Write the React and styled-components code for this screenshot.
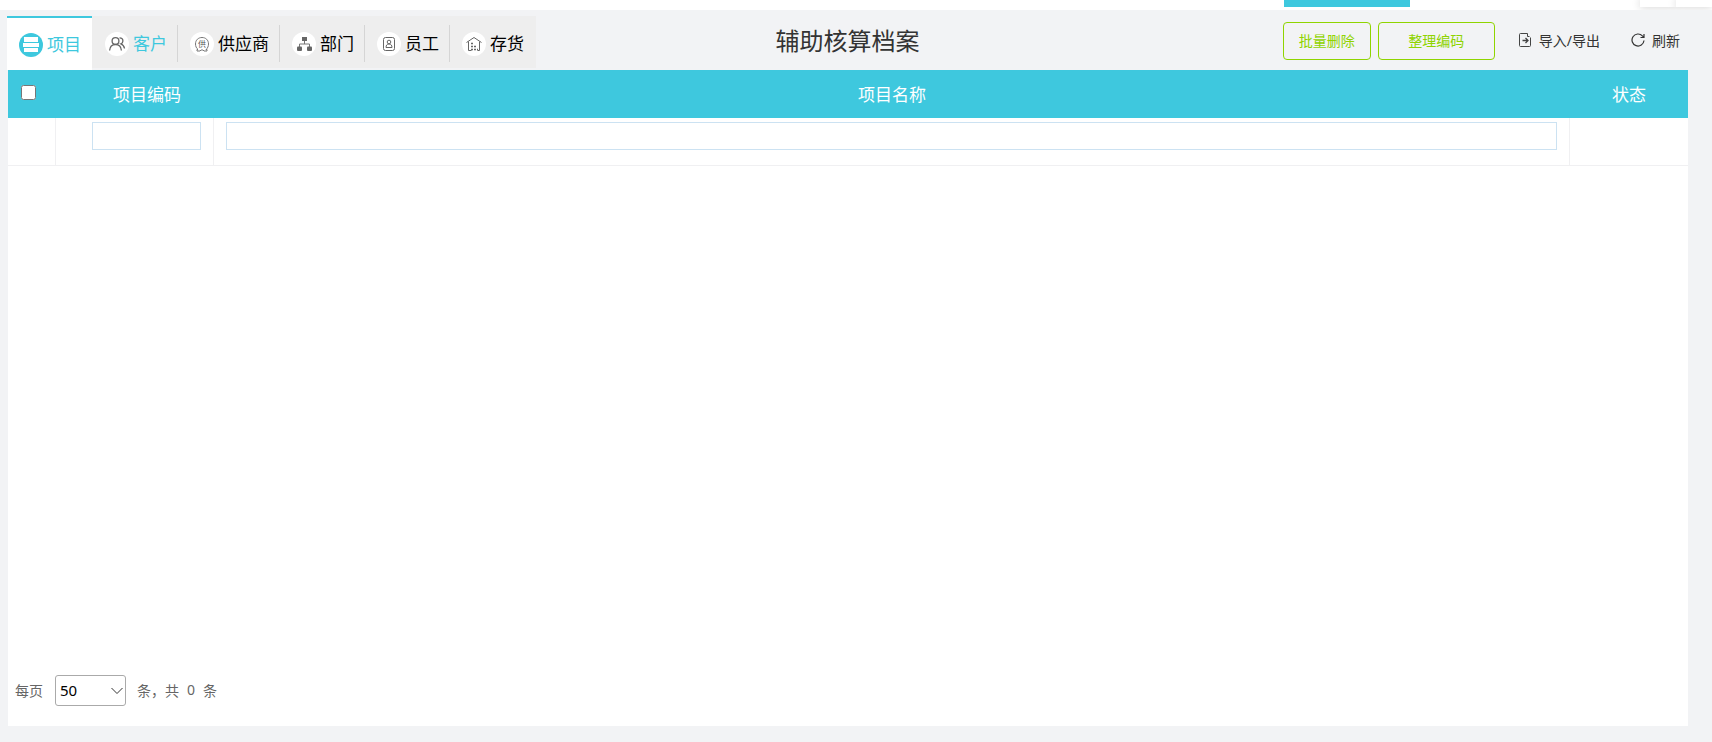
import React, { useState } from 'react';
import styled, { createGlobalStyle } from 'styled-components';

const GlobalStyle = createGlobalStyle`
  * {
    box-sizing: border-box;
  }

  body {
    margin: 0;
    background-color: #f2f3f5;
    font-family: 'Noto Sans', 'Noto Sans CJK SC', sans-serif;
    font-size: 14px;
    color: #333;
  }

  button,
  input,
  select {
    font-family: inherit;
  }
`;

const ProjectIcon = () => (
  <svg width="24" height="24" viewBox="0 0 24 24" fill="#fff">
    <path d="M5 4h14v5H5zM4 10h16v4H4zM5 15h14v4H5z" />
  </svg>
);

const CustomerIcon = () => (
  <svg width="24" height="24" viewBox="0 0 24 24" fill="none" stroke="#666" strokeWidth="1.3">
    <circle cx="10.500" cy="9" r="3.400" />
    <path d="M4.600 18.500c.3-3.600 2.600-6 5.900-6s5.600 2.400 5.900 6M14.500 5.800c2 0 3.400 1.300 3.400 3.100 0 1.400-.8 2.400-2 2.900 2 .7 3.200 2.300 3.600 4.700" />
  </svg>
);

const SupplierIcon = () => (
  <svg width="24" height="24" viewBox="0 0 24 24" fill="none" stroke="#777">
    <path d="M8 17.5C6.300 16.300 5.500 14 5.500 12c0-4 2.800-6.500 6.500-6.500s6.500 2.500 6.500 6.500c0 2-.8 4.300-2.500 5.500M8 17.500H7V19h3l1-1h2l1 1h3v-1.500h-1" />
    <text x="12" y="15" fontSize="8" textAnchor="middle" fill="#555" stroke="none">
      供
    </text>
  </svg>
);

const DepartmentIcon = () => (
  <svg width="24" height="24" viewBox="0 0 24 24" fill="#666">
    <rect x="10" y="5" width="5" height="4" />
    <path d="M12.5 9v3M7.500 15v-3h10v3" fill="none" stroke="#777" />
    <rect x="5" y="14.500" width="5" height="4.500" rx="1" />
    <rect x="15" y="14.500" width="5" height="4.500" rx="1" />
  </svg>
);

const StaffIcon = () => (
  <svg width="24" height="24" viewBox="0 0 24 24" fill="none" stroke="#666">
    <rect x="6.500" y="5.500" width="11" height="13" rx="2" />
    <circle cx="12" cy="10" r="1.800" />
    <path d="M9 15.500c0-2.200 1-3.500 3-3.500s3 1.300 3 3.500z" />
  </svg>
);

const StockIcon = () => (
  <svg width="24" height="24" viewBox="0 0 24 24" fill="none" stroke="#666">
    <path d="M4.500 10.500l7.500-5 7.500 5M6.500 9.500v9h3M17.500 9.500v9h-2" />
    <path d="M9 11.500h2M9 14.500h2M12 14.500h2M9 17.500h2M12 17.500h2M15 17.500h1" strokeWidth="1.500" />
  </svg>
);

const ExportIcon = () => (
  <svg width="14" height="16" viewBox="0 0 14 16" fill="none" stroke="#444">
    <path d="M9.500 1.500h-7a1 1 0 0 0-1 1v11a1 1 0 0 0 1 1h9a1 1 0 0 0 1-1v-8M9.500 1.500v3h2" />
    <path d="M4.500 8.500h5M7.500 6L10 8.500 7.500 11" strokeWidth="1.300" />
  </svg>
);

const RefreshIcon = () => (
  <svg width="14" height="14" viewBox="0 0 14 14" fill="none" stroke="#333" strokeWidth="1.200">
    <path d="M13 7.500a6 6 0 1 1-1.600-4.600L12.600 4M13 1v3.500H9.500" />
  </svg>
);

const tabs = [
  { name: '客户', icon: <CustomerIcon />, hover: true },
  { name: '供应商', icon: <SupplierIcon /> },
  { name: '部门', icon: <DepartmentIcon /> },
  { name: '员工', icon: <StaffIcon /> },
  { name: '存货', icon: <StockIcon /> },
];

const App = () => {
  const [code, setCode] = useState('');
  const [name, setName] = useState('');
  const [pageSize, setPageSize] = useState('50');

  return (
    <Page>
      <GlobalStyle />
      <TopStrip>
        <StripTab />
        <StripTool />
        <StripTool />
      </TopStrip>
      <Header>
        <Tabs>
          <ActiveTab type="button">
            <TabIcon $active>
              <ProjectIcon />
            </TabIcon>
            项目
          </ActiveTab>
          <TabGroup>
            {tabs.map((tab) => (
              <Tab key={tab.name} type="button" $hover={tab.hover}>
                <TabIcon>{tab.icon}</TabIcon>
                {tab.name}
              </Tab>
            ))}
          </TabGroup>
        </Tabs>
        <Title>辅助核算档案</Title>
        <Actions>
          <OutlineButton type="button">批量删除</OutlineButton>
          <OutlineButton type="button" $wide>
            整理编码
          </OutlineButton>
          <TextButton type="button">
            <ExportIcon />
            导入/导出
          </TextButton>
          <TextButton type="button">
            <RefreshIcon />
            刷新
          </TextButton>
        </Actions>
      </Header>
      <Panel>
        <Table>
          <colgroup>
            <col width="48" />
            <col width="158" />
            <col />
            <col width="118" />
          </colgroup>
          <thead>
            <tr>
              <CheckCell>
                <Checkbox type="checkbox" aria-label="全选" />
              </CheckCell>
              <HeadCell $indent>项目编码</HeadCell>
              <HeadCell>项目名称</HeadCell>
              <HeadCell>状态</HeadCell>
            </tr>
          </thead>
          <tbody>
            <tr>
              <FilterCell />
              <FilterCell $indent>
                <FilterInput
                  aria-label="项目编码"
                  value={code}
                  onChange={(e) => setCode(e.target.value)}
                />
              </FilterCell>
              <FilterCell>
                <FilterInput
                  aria-label="项目名称"
                  value={name}
                  onChange={(e) => setName(e.target.value)}
                />
              </FilterCell>
              <FilterCell />
            </tr>
          </tbody>
        </Table>
        <Pager>
          <PagerLabel htmlFor="pageSize">每页</PagerLabel>
          <PageSize
            id="pageSize"
            value={pageSize}
            onChange={(e) => setPageSize(e.target.value)}
          >
            <option>20</option>
            <option>50</option>
            <option>100</option>
          </PageSize>
          <PagerText>
            <span>条，共</span>
            <span>0</span>
            <span>条</span>
          </PagerText>
        </Pager>
      </Panel>
    </Page>
  );
};

export default App;

const Page = styled.div`
  display: flex;
  flex-direction: column;
  min-height: 100vh;
`;

const TopStrip = styled.div`
  display: flex;
  justify-content: flex-end;
  height: 10px;
  background-color: #fff;
  overflow: hidden;
`;

const StripTab = styled.div`
  width: 126px;
  height: 7px;
  margin-right: 230px;
  background-color: #3ec8de;
`;

const StripTool = styled.div`
  width: 36px;
  height: 7px;
  background-color: #fff;
  box-shadow: 0 0 8px rgba(0, 0, 0, 0.2);
`;

const Header = styled.header`
  display: grid;
  grid-template-columns: 1fr auto 1fr;
  height: 60px;
  padding: 6px 24px 0 7px;
`;

const Tabs = styled.nav`
  display: flex;
  align-items: flex-start;
`;

const TabGroup = styled.div`
  display: flex;
  align-items: center;
  height: 52px;
  padding: 2px 1px 0;
  background-color: #eee;
`;

const Tab = styled.button`
  display: flex;
  align-items: center;
  gap: 4px;
  height: 37px;
  padding: 2px 10px 0 12px;
  border: none;
  border-right: 1px solid #d5d5d5;
  background-color: transparent;
  color: ${(props) => (props.$hover ? '#3ec8de' : '#000')};
  font-size: 17px;
  line-height: 24px;
  white-space: nowrap;
  cursor: pointer;

  &:last-child {
    border-right-color: transparent;
  }
`;

const ActiveTab = styled(Tab)`
  height: 54px;
  padding: 2px 11px 0 12px;
  border-right: none;
  border-top: 2px solid #3ec8de;
  background-color: #fff;
  color: #3ec8de;
`;

const TabIcon = styled.span`
  display: flex;
  width: 24px;
  height: 24px;
  border-radius: 50%;
  background-color: ${(props) => (props.$active ? '#3ec8de' : '#fff')};
`;

const Title = styled.h1`
  margin: 7px 0 0;
  font-size: 24px;
  font-weight: 400;
  line-height: 36px;
`;

const Actions = styled.div`
  display: flex;
  align-items: center;
  justify-content: flex-end;
  gap: 7px;
  height: 50px;
`;

const OutlineButton = styled.button`
  width: ${(props) => (props.$wide ? '117px' : '88px')};
  height: 38px;
  padding: 0 0 2px;
  border: 1px solid #8fd400;
  border-radius: 4px;
  background-color: transparent;
  color: #8fd400;
  font-size: 14px;
  cursor: pointer;
`;

const TextButton = styled.button`
  display: flex;
  align-items: center;
  gap: 7px;
  padding: 0 8px 2px;
  margin-left: 8px;
  border: none;
  background-color: transparent;
  color: #333;
  font-size: 14px;
  white-space: nowrap;
  cursor: pointer;
`;

const Panel = styled.main`
  display: flex;
  flex: 1;
  flex-direction: column;
  margin: 0 24px 16px 8px;
  background-color: #fff;
`;

const Table = styled.table`
  width: 100%;
  table-layout: fixed;
  border-collapse: separate;
  border-spacing: 0;
`;

const HeadCell = styled.th`
  height: 48px;
  padding: ${(props) => (props.$indent ? '2px 12px 0 36px' : '2px 0 0')};
  background-color: #3ec8de;
  color: #fff;
  font-size: 17px;
  font-weight: 400;
  line-height: 24px;
`;

const CheckCell = styled(HeadCell)`
  padding: 0 0 0 13px;
  text-align: left;
`;

const Checkbox = styled.input`
  display: block;
  width: 15px;
  height: 15px;
  margin: 0 0 4px;
`;

const FilterCell = styled.td`
  height: 48px;
  padding: ${(props) => (props.$indent ? '4px 12px 0 36px' : '4px 12px 0')};
  border-right: 1px solid #f0f0f2;
  border-bottom: 1px solid #f0f0f2;
  vertical-align: top;

  &:last-child {
    border-right: none;
  }
`;

const FilterInput = styled.input`
  display: block;
  width: 100%;
  height: 28px;
  padding: 0 6px;
  border: 1px solid #cce2f2;
  outline: none;
`;

const Pager = styled.div`
  display: flex;
  align-items: center;
  margin-top: auto;
  padding: 0 7px 20px;
  color: #666;
`;

const PagerLabel = styled.label`
  padding-bottom: 2px;
`;

const PageSize = styled.select`
  width: 71px;
  height: 31px;
  margin: 0 11px 0 12px;
  padding: 0 4px 2px;
  border: 1px solid #aaa;
  border-radius: 3px;
  appearance: none;
  background: #fff
    url("data:image/svg+xml,%3Csvg xmlns='http://www.w3.org/2000/svg' width='12' height='8' fill='none' stroke='%23333'%3E%3Cpath d='M.5 1l5.500 5.500L11.500 1'/%3E%3C/svg%3E")
    no-repeat right 2px center;
  color: #000;
  font-size: 15px;
`;

const PagerText = styled.span`
  display: flex;
  gap: 8px;
  padding-bottom: 2px;
`;
